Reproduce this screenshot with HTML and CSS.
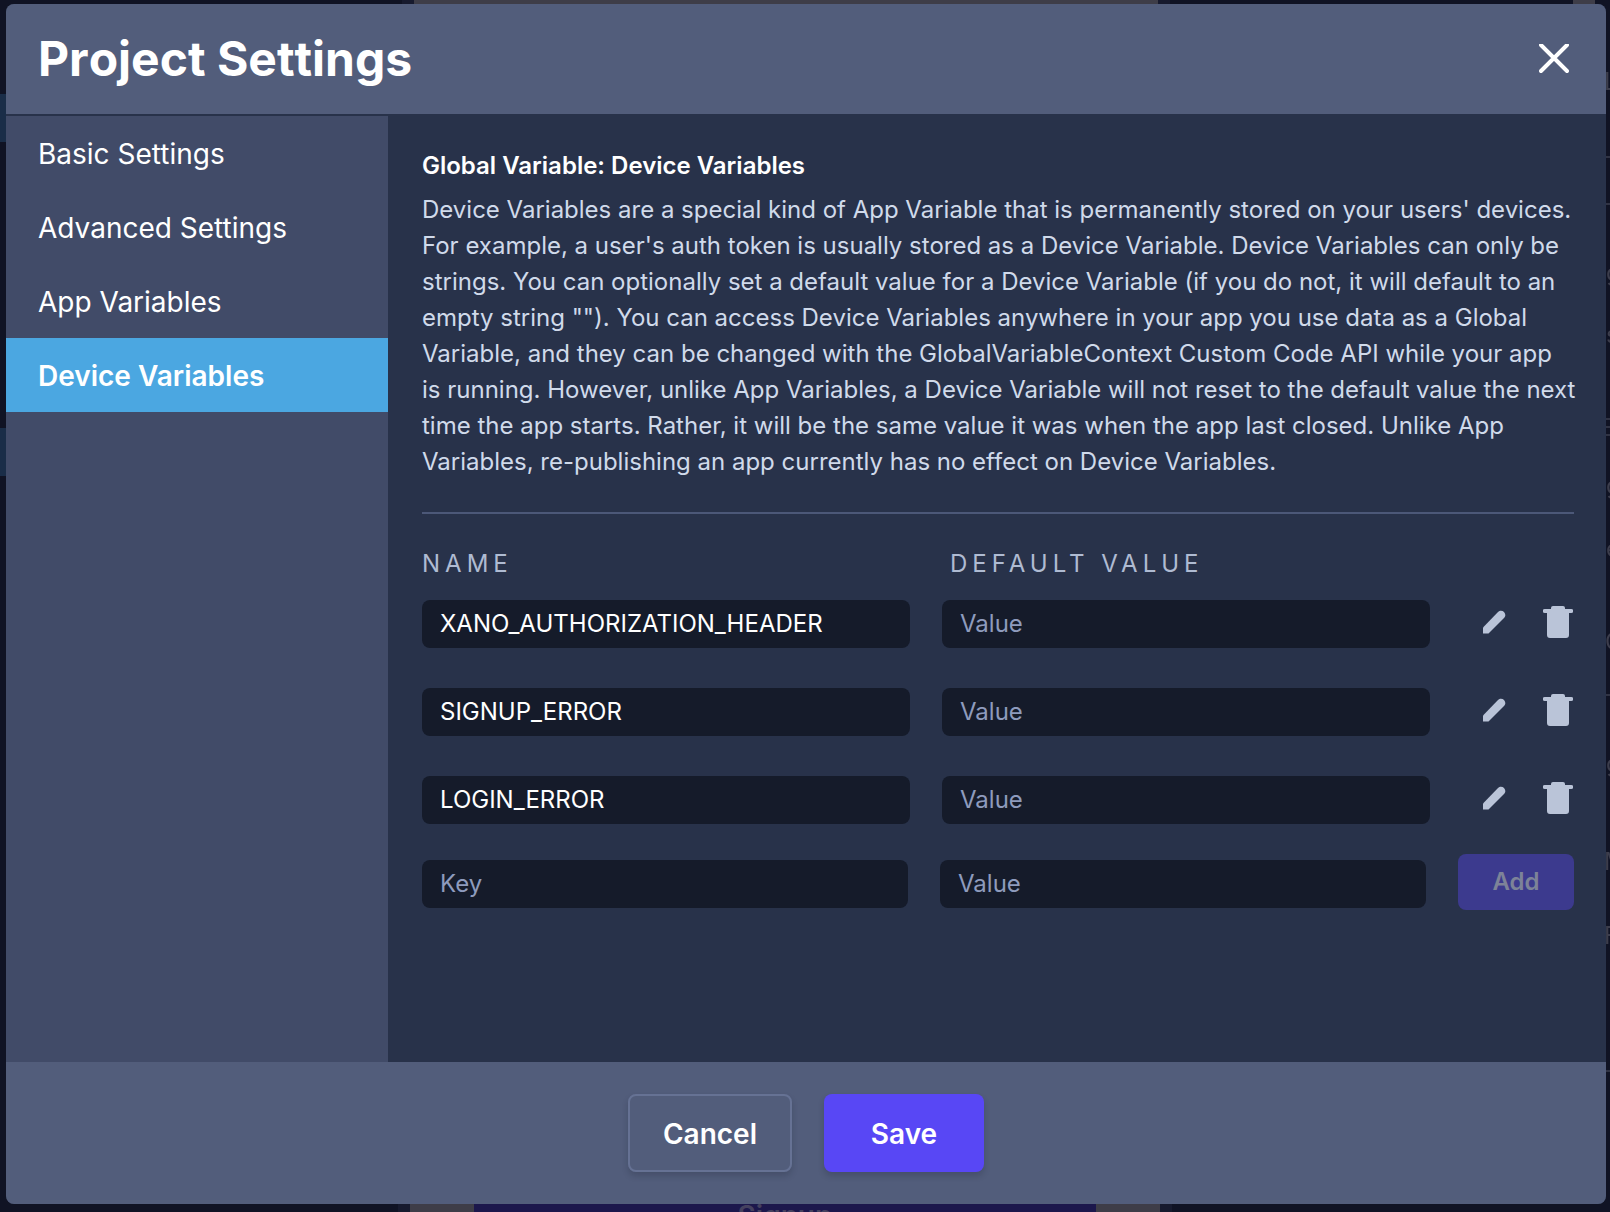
FILE: index.html
```html
<!DOCTYPE html>
<html lang="en">
<head>
<meta charset="utf-8">
<meta name="viewport" content="width=device-width, initial-scale=1">
<title>Project Settings</title>
<link rel="stylesheet" href="styles.css">
</head>
<body>
<svg class="sprite" aria-hidden="true">
  <symbol id="pencil" viewBox="0 0 24 24"><path d="M1 23.500V17.500L16 2C20 -2 26 4 22 8L6.500 23.500Z"/></symbol>
  <symbol id="trash" viewBox="0 0 30 32"><path d="M8 3V2Q8 0 10 0H20Q22 0 22 2V3H28.300A1.700 1.700 0 0 1 28.300 7H26V29Q26 32 23 32H7Q4 32 4 29V7H1.700A1.700 1.700 0 0 1 1.700 3Z"/></symbol>
</svg>

<div class="backdrop" aria-hidden="true">
  <div class="phone-top"></div>
  <div class="phone-bottom"><div class="phone-button">Signup</div></div>
  <div class="tint tint-a"></div>
  <div class="tint tint-b"></div>
  <div class="tab-mark"></div>
  <svg class="inspector" width="4" height="1212">
    <path d="M0 157H4M0 204H4M0 419H4M0 427H4M0 435H4M0 695H4M0 1071H4"/>
    <text x="-2" y="90">L</text>
    <text x="0" y="281">g</text>
    <text x="0" y="343">s</text>
    <text x="0" y="494">g</text>
    <text x="0" y="557">e</text>
    <text x="-1" y="650">C</text>
    <text x="0" y="772">g</text>
    <text x="-2" y="870">M</text>
    <text x="-2" y="944">F</text>
  </svg>
</div>

<div class="modal" role="dialog" aria-labelledby="title">
  <header class="modal-header">
    <h1 class="title" id="title">Project Settings</h1>
    <button class="icon-button close" type="button" aria-label="Close">
      <svg width="30" height="30" viewBox="0 0 30 30"><path d="M2 1L28 27M28 1L2 27"/></svg>
    </button>
  </header>

  <div class="modal-body">
    <nav class="sidebar">
      <a class="nav-item" href="#basic">Basic Settings</a>
      <a class="nav-item" href="#advanced">Advanced Settings</a>
      <a class="nav-item" href="#app">App Variables</a>
      <a class="nav-item active" href="#device" aria-current="page">Device Variables</a>
    </nav>

    <main class="content">
      <h2 class="heading">Global Variable: Device Variables</h2>
      <p class="description">Device Variables are a special kind of App Variable that is permanently stored on your users' devices. For example, a user's auth token is usually stored as a Device Variable. Device Variables can only be strings. You can optionally set a default value for a Device Variable (if you do not, it will default to an empty string ""). You can access Device Variables anywhere in your app you use data as a Global Variable, and they can be changed with the GlobalVariableContext Custom Code API while your app<br>is running. However, unlike App Variables, a Device Variable will not reset to the default value the next time the app starts. Rather, it will be the same value it was when the app last closed. Unlike App Variables, re-publishing an app currently has no effect on Device Variables.</p>
      <hr class="divider">

      <table class="variables">
        <thead>
          <tr>
            <th scope="col">Name</th>
            <th scope="col" class="indent">Default Value</th>
            <td class="actions-column"></td>
          </tr>
        </thead>
        <tbody>
          <tr>
            <td><input class="field" type="text" aria-label="Name" value="XANO_AUTHORIZATION_HEADER"></td>
            <td><input class="field" type="text" aria-label="Default value" placeholder="Value"></td>
            <td class="actions-column"><div class="actions">
              <button class="icon-button" type="button" aria-label="Edit"><svg width="24" height="24"><use href="#pencil"/></svg></button>
              <button class="icon-button" type="button" aria-label="Delete"><svg width="30" height="32"><use href="#trash"/></svg></button>
            </div></td>
          </tr>
          <tr>
            <td><input class="field" type="text" aria-label="Name" value="SIGNUP_ERROR"></td>
            <td><input class="field" type="text" aria-label="Default value" placeholder="Value"></td>
            <td class="actions-column"><div class="actions">
              <button class="icon-button" type="button" aria-label="Edit"><svg width="24" height="24"><use href="#pencil"/></svg></button>
              <button class="icon-button" type="button" aria-label="Delete"><svg width="30" height="32"><use href="#trash"/></svg></button>
            </div></td>
          </tr>
          <tr>
            <td><input class="field" type="text" aria-label="Name" value="LOGIN_ERROR"></td>
            <td><input class="field" type="text" aria-label="Default value" placeholder="Value"></td>
            <td class="actions-column"><div class="actions">
              <button class="icon-button" type="button" aria-label="Edit"><svg width="24" height="24"><use href="#pencil"/></svg></button>
              <button class="icon-button" type="button" aria-label="Delete"><svg width="30" height="32"><use href="#trash"/></svg></button>
            </div></td>
          </tr>
        </tbody>
      </table>

      <form class="add-row">
        <input class="field" type="text" aria-label="Key" placeholder="Key">
        <input class="field" type="text" aria-label="Value" placeholder="Value">
        <button class="add" type="button" disabled>Add</button>
      </form>
    </main>
  </div>

  <footer class="modal-footer">
    <button class="button cancel" type="button">Cancel</button>
    <button class="button save" type="button">Save</button>
  </footer>
</div>
</body>
</html>
```
FILE: styles.css
```css
* { box-sizing: border-box; }

body {
  margin: 0;
  min-height: 100vh;
  padding: 4px 4px 8px 6px;
  display: flex;
  background: #101324;
  color: #fff;
  font-family: Inter, "Liberation Sans", sans-serif;
  font-size: 24px;
  line-height: 36px;
}

button, input { font: inherit; color: inherit; }

.sprite { position: absolute; width: 0; height: 0; }

/* Dimmed editor behind the dialog */
.backdrop { position: fixed; inset: 0; overflow: hidden; }
.phone-top {
  position: absolute;
  top: 0;
  left: 50%;
  width: 768px;
  height: 12px;
  margin-left: -403px;
  background: #3e3d48;
  border: solid #171a2e;
  border-width: 0 12px;
}
.phone-bottom {
  position: absolute;
  bottom: 0;
  left: 50%;
  width: 774px;
  height: 12px;
  margin-left: -407px;
  padding: 0 64px;
  background: #3e3d48;
  border: solid #171a2e;
  border-width: 0 12px;
}
.phone-button {
  height: 12px;
  background: #1c174c;
  color: #45415f;
  font-size: 28px;
  line-height: 32px;
  font-weight: 600;
  text-align: center;
  overflow: hidden;
}
.tint { position: absolute; left: 0; width: 8px; height: 48px; background: #1a2d48; }
.tint-a { top: 94px; }
.tint-b { top: 428px; }
.tab-mark { position: absolute; top: 0; right: 15px; width: 22px; height: 8px; background: #3e3d48; }
.inspector { position: absolute; top: 0; right: 0; fill: #3c3d4c; stroke: none; }
.inspector path { stroke: #303344; stroke-width: 2; }

.modal {
  position: relative;
  flex: 1;
  min-width: 0;
  display: flex;
  flex-direction: column;
  border-radius: 8px;
  overflow: hidden;
  background: #28324a;
}

.modal-header {
  display: flex;
  align-items: center;
  justify-content: space-between;
  padding: 25px 37px 25px 32px;
  background: #525d7b;
}
.title {
  margin: 0;
  font-size: 48px;
  line-height: 60px;
  font-weight: 700;
}
.title, .nav-item, .description {
  font-feature-settings: "calt" 0, "liga" 0, "ccmp" 0;
}
.title { font-kerning: none; }

.icon-button {
  display: flex;
  padding: 0;
  border: 0;
  background: none;
  color: #bac4d8;
  fill: currentColor;
}
.close { fill: none; stroke: #fff; stroke-width: 4; stroke-linecap: round; }

.modal-body { flex: 1; display: flex; }
.sidebar { flex: 0 0 382px; margin-top: 2px; background: #414b68; }
.nav-item {
  display: block;
  padding: 20px 32px 18px;
  font-size: 28px;
  color: #fff;
  text-decoration: none;
}
.active { background: #4ba7e1; font-weight: 600; }

.content { flex: 1; min-width: 0; padding: 34px 32px 32px 34px; }
.heading { margin: 0; font-size: 24px; font-weight: 600; }
.description { margin: 8px -10px 32px 0; color: #d0daea; }
.divider { height: 2px; margin: 0 0 32px; border: 0; background: #4c5878; }

.variables { width: 100%; table-layout: fixed; border-collapse: collapse; }
.variables th, .variables td { padding: 0 32px 40px 0; text-align: left; }
.variables thead th {
  padding-bottom: 18px;
  color: #afbbd2;
  font-weight: 400;
  text-transform: uppercase;
  letter-spacing: 5px;
}
.variables thead td { padding: 0; }
.variables .indent { padding-left: 8px; }
.variables .actions-column { width: 112px; padding-right: 0; }
.variables tbody tr:last-child td { padding-bottom: 30px; }
.actions {
  display: flex;
  align-items: center;
  justify-content: flex-end;
  gap: 37px;
  height: 44px;
  margin-bottom: 4px;
  padding-right: 1px;
}

.field {
  display: block;
  width: 100%;
  min-width: 0;
  height: 48px;
  padding: 0 18px 2px;
  border: 0;
  border-radius: 8px;
  background: #151b2a;
  color: #fff;
}
.field::placeholder { color: #8e9bbd; opacity: 1; }

.add-row { display: flex; align-items: flex-end; gap: 32px; }
.add-row .field { flex: 1; margin-bottom: 2px; }
.add {
  width: 116px;
  height: 56px;
  padding: 0;
  border: 0;
  border-radius: 8px;
  background: #3c3a8e;
  color: #7d8398;
  font-weight: 600;
}

.modal-footer {
  display: flex;
  justify-content: center;
  gap: 32px;
  padding: 32px;
  background: #525d7b;
}
.button {
  height: 78px;
  padding: 2px 0 0;
  border: 0;
  border-radius: 8px;
  background: none;
  font-size: 28px;
  font-weight: 600;
  box-shadow: 0 4px 6px rgb(20 27 42 / 20%);
}
.cancel { width: 164px; border: 2px solid #667294; }
.save { width: 160px; background: #5847f5; }
```
